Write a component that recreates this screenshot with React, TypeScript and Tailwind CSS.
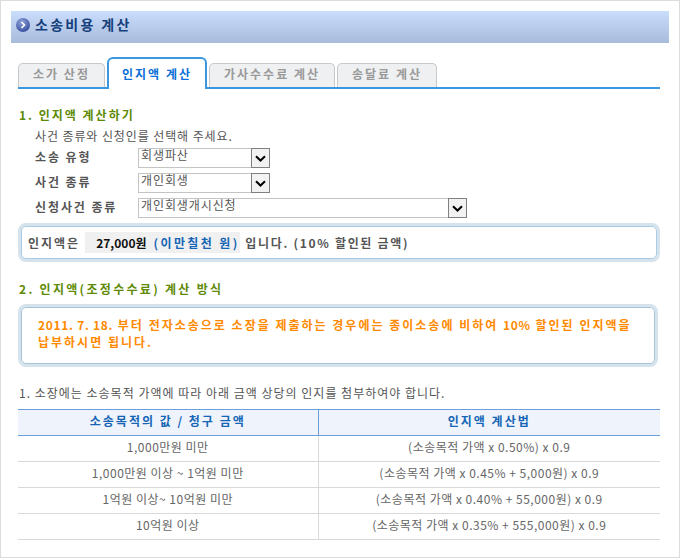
import React from "react";

const font = { fontFamily: '"Noto Sans CJK KR", "Liberation Sans", sans-serif' };

function Tab({ label, w, active }: { label: string; w: string; active?: boolean }) {
  if (active) {
    return (
      <div className={`${w} relative z-10 h-[32px] -mb-[2px] pb-[1px] flex items-center justify-center rounded-t-[6px] border-2 border-b-0 border-[#3b98e0] bg-white text-[12px] font-bold tracking-[2px] text-[#0a6fd6]`}>
        {label}
      </div>
    );
  }
  return (
    <div className={`${w} h-[24px] pb-[3px] flex items-center justify-center rounded-t-[5px] border border-b-0 border-[#c8c8c8] bg-[#eff0f2] text-[12px] font-bold tracking-[2px] text-[#999999]`}>
      {label}
    </div>
  );
}

function SelectBox({ value, w }: { value: string; w: string }) {
  return (
    <div className={`${w} h-[20px] flex border border-[#c4c4c4] bg-white`}>
      <div className="flex-1 pl-[2px] text-[12px] leading-[12px] tracking-[0.9px] text-[#555555]">{value}</div>
      <div className="w-[19px] -my-px -mr-px flex items-center justify-center border border-[#808080] bg-[#f2f2f2]">
        <svg width="11" height="7" viewBox="0 0 11 7" fill="none">
          <path d="M1 1.2 L5.5 5.5 L10 1.2" stroke="#000" strokeWidth="2" />
        </svg>
      </div>
    </div>
  );
}

function FormRow({ label, value, w }: { label: string; value: string; w: string }) {
  return (
    <div className="flex items-center h-[20px] mb-[5px]">
      <div className="w-[103px] pb-[2px] text-[12px] font-bold tracking-[1.9px] text-[#555555]">{label}</div>
      <SelectBox value={value} w={w} />
    </div>
  );
}

const rows = [
  ["1,000만원 미만", "(소송목적 가액 x 0.50%) x 0.9"],
  ["1,000만원 이상 ~ 1억원 미만", "(소송목적 가액 x 0.45% + 5,000원) x 0.9"],
  ["1억원 이상~ 10억원 미만", "(소송목적 가액 x 0.40% + 55,000원) x 0.9"],
  ["10억원 이상", "(소송목적 가액 x 0.35% + 555,000원) x 0.9"],
];

export default function App() {
  return (
    <div style={font} className="w-[680px] h-[558px] border border-[#dcdcdc] bg-white pt-[10px] overflow-hidden">
      <div className="ml-[10px] w-[658px] h-[32px] flex items-center pl-[5px] pb-[5px] bg-gradient-to-b from-[#cbddfc] to-[#a8bbdb]">
        <svg width="14" height="14" viewBox="0 0 14 14">
          <defs>
            <radialGradient id="g" cx="0.4" cy="0.3" r="0.8">
              <stop offset="0" stopColor="#8fa3dc" />
              <stop offset="1" stopColor="#2f4596" />
            </radialGradient>
          </defs>
          <circle cx="7" cy="7" r="7" fill="url(#g)" />
          <path d="M5.5 4 L8.5 7 L5.5 10" stroke="#fff" strokeWidth="1.6" fill="none" />
        </svg>
        <div className="ml-[5px] text-[14px] font-bold tracking-[2.3px] text-[#14407c]">소송비용 계산</div>
      </div>

      <div className="ml-[17px] mr-[19px] mt-[14px] h-[32px] flex items-end gap-[2px] border-b-2 border-[#3b98e0]">
        <Tab label="소가 산정" w="w-[87px]" />
        <Tab label="인지액 계산" w="w-[100px]" active />
        <Tab label="가사수수료 계산" w="w-[126px]" />
        <Tab label="송달료 계산" w="w-[100px]" />
      </div>

      <div className="ml-[18px] mt-[17px] h-[18px] leading-[18px] text-[12px] font-bold tracking-[2px] text-[#5e8a06]">1. 인지액 계산하기</div>
      <div className="ml-[17px] mt-[3px] h-[18px] pl-[17px] leading-[18px] text-[12px] tracking-[0.9px] text-[#555555]">사건 종류와 신청인를 선택해 주세요.</div>
      <div className="ml-[34px] mt-[3px]">
        <FormRow label="소송 유형" value="회생파산" w="w-[132px]" />
        <FormRow label="사건 종류" value="개인회생" w="w-[132px]" />
        <FormRow label="신청사건 종류" value="개인회생개시신청" w="w-[329px]" />
      </div>

      <div className="ml-[17px] w-[642px] h-[39px] rounded-[8px] border-[3px] border-[#d5e3ed]">
        <div className="h-full flex items-center rounded-[5px] border border-[#a9cbe3] pl-[6px] text-[12px] font-bold text-[#555555]">
          <span className="tracking-[2px]">인지액은</span>
          <span className="ml-[5px] h-[21px] w-[155px] pl-[11px] flex items-center bg-[#f0f0f0]">
            <span className="text-[#111111]">27,000원</span>
            <span className="ml-[7px] tracking-[2.4px] text-[#1565b5]">(이만칠천 원)</span>
          </span>
          <span className="ml-[5px] tracking-[1.7px]">입니다. (10% 할인된 금액)</span>
        </div>
      </div>

      <div className="ml-[18px] mt-[18px] h-[18px] leading-[18px] text-[12px] font-bold tracking-[2.3px] text-[#5e8a06]">2. 인지액(조정수수료) 계산 방식</div>
      <div className="ml-[17px] mt-[6px] w-[640px] h-[63px] rounded-[8px] border-[3px] border-[#d5e3ed]">
        <div className="h-full rounded-[5px] border border-[#a9c3d8] pl-[16px] pt-[8px] text-[12px] font-bold leading-[17px] tracking-[2px] text-[#ff8a00]">
          <span className="tracking-[0.7px]">2011. 7. 18.</span> 부터 전자소송으로 소장을 제출하는 경우에는 종이소송에 비하여 <span className="tracking-[0.7px]">10%</span> 할인된 인지액을
          <br />
          납부하시면 됩니다.
        </div>
      </div>

      <div className="ml-[18px] mt-[17px] h-[18px] leading-[18px] text-[12px] tracking-[1px] text-[#555555]">1. 소장에는 소송목적 가액에 따라 아래 금액 상당의 인지를 첨부하여야 합니다.</div>

      <table className="ml-[17px] mt-[7px] w-[642px] border-collapse table-fixed text-[12px]">
        <thead>
          <tr className="h-[26px] bg-[#eff4fc] border-y border-[#6a9fdc]">
            <th className="w-[300px] pb-[3px] border-r border-[#6a9fdc] font-bold tracking-[2px] text-[#1565b5]">소송목적의 값 / 청구 금액</th>
            <th className="pb-[3px] font-bold tracking-[2px] text-[#1565b5]">인지액 계산법</th>
          </tr>
        </thead>
        <tbody>
          {rows.map(([a, b]) => (
            <tr key={a} className="h-[26px] border-b border-[#d9d9d9] text-[#666666] tracking-[0.5px]">
              <td className="pb-[3px] border-r border-[#d9d9d9] text-center">{a}</td>
              <td className="pb-[3px] text-center">{b}</td>
            </tr>
          ))}
        </tbody>
      </table>
    </div>
  );
}
